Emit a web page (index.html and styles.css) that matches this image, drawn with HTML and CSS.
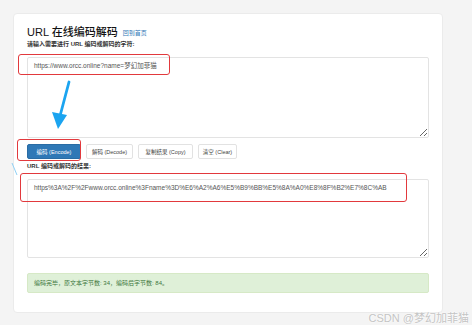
FILE: index.html
```html
<!DOCTYPE html>
<html lang="zh-CN">
<head>
  <meta charset="UTF-8" />
  <meta name="viewport" content="width=device-width, initial-scale=1.0"/>
  <title>URL 在线编码解码</title>
  <link rel="stylesheet" href="styles.css">
</head>
<body>

<div class="page">
  <div class="card">
    <h3 class="title">URL 在线编码解码 <a class="home-link" href="#">回到首页</a></h3>
    <p class="label">请输入需要进行 URL 编码或解码的字符:</p>
    <textarea class="box box-input">https://www.orcc.online?name=梦幻加菲猫</textarea>

    <div class="btn-row">
      <button class="btn btn-primary btn-encode">编码 (Encode)</button>
      <button class="btn btn-decode">解码 (Decode)</button>
      <button class="btn btn-copy">复制结果 (Copy)</button>
      <button class="btn btn-clear">清空 (Clear)</button>
    </div>

    <p class="label label-result">URL 编码或解码的结果:</p>
    <textarea class="box box-output">https%3A%2F%2Fwww.orcc.online%3Fname%3D%E6%A2%A6%E5%B9%BB%E5%8A%A0%E8%8F%B2%E7%8C%AB</textarea>

    <div class="alert-ok">编码完毕，原文本字节数: 34，编码后字节数: 84。</div>
  </div>

  <!-- marcações da captura -->
  <div class="mark mark-input"></div>
  <div class="mark mark-btn"></div>
  <div class="mark mark-output"></div>

  <svg class="arrow" width="474" height="327" viewBox="0 0 474 327">
    <line x1="69" y1="82" x2="60" y2="116" stroke="#1ba4f0" stroke-width="2.8" stroke-linecap="round"/>
    <polygon points="52,112 58,129 67,115" fill="#1ba4f0"/>
    <line x1="12" y1="163" x2="17" y2="175" stroke="#8fd0f5" stroke-width="1"/>
  </svg>

  <div class="watermark">CSDN @梦幻加菲猫</div>
</div>

</body>
</html>
```

FILE: styles.css
```css
body {
  margin: 0;
  background-color: #ffffff;
  font-family: "Liberation Sans", "Noto Sans CJK SC", sans-serif;
  color: #333;
}
.page {
  position: relative;
  width: 472px;
  height: 325px;
  background-color: #f4f4f4;
  padding: 13px 0 0 13px;
  box-sizing: border-box;
}
.card {
  width: 430px;
  box-sizing: border-box;
  background-color: #fff;
  border: 1px solid #ebebeb;
  border-radius: 4px;
  padding: 11px 13px 19px 13px;
}
.title {
  margin: 0;
  font-size: 11px;
  line-height: 14px;
  font-weight: 500;
  color: #111;
}
.home-link {
  font-size: 6px;
  font-weight: normal;
  color: #337ab7;
  text-decoration: none;
  margin-left: 2px;
  vertical-align: 1px;
}
.label {
  margin: 0 0 9px 0;
  font-size: 6px;
  line-height: 8px;
  font-weight: bold;
  color: #333;
}
.label-result { margin-top: 3px; }
.box {
  display: block;
  width: 402px;
  box-sizing: border-box;
  margin: 0;
  border: 1px solid #e3e3e3;
  border-radius: 2px;
  padding: 3px 6px;
  font-family: "Liberation Sans", "Noto Sans CJK SC", sans-serif;
  font-size: 6.5px;
  line-height: 9px;
  color: #555;
  background: #fff;
  outline: none;
}
.box-input { height: 81px; }
.box-output { height: 79px; }
.btn-row {
  display: flex;
  gap: 5px;
  margin-top: 6px;
}
.btn {
  height: 15px;
  padding: 0;
  border: 1px solid #e2e2e2;
  border-radius: 2px;
  background: #fff;
  color: #444;
  font-family: "Liberation Sans", "Noto Sans CJK SC", sans-serif;
  font-size: 5.5px;
  cursor: pointer;
}
.btn-primary {
  background-color: #2f78b6;
  border-color: #2a6ca4;
  color: #fff;
}
.btn-encode { width: 54px; }
.btn-decode { width: 47px; }
.btn-copy { width: 55px; }
.btn-clear { width: 39px; }
.alert-ok {
  margin-top: 15px;
  height: 20px;
  box-sizing: border-box;
  background-color: #dff0d8;
  border: 1px solid #d6e9c6;
  border-radius: 2px;
  color: #3c763d;
  font-size: 6px;
  line-height: 18px;
  padding: 0 6px;
}
.mark {
  position: absolute;
  border: 1.5px solid #e2393d;
  border-radius: 3px;
  box-sizing: border-box;
}
.mark-input { left: 18px; top: 54px; width: 152px; height: 21px; }
.mark-btn { left: 17px; top: 139px; width: 64px; height: 22px; }
.mark-output { left: 20px; top: 173px; width: 387px; height: 29px; }
.arrow {
  position: absolute;
  left: 0;
  top: 0;
}
.watermark {
  position: absolute;
  right: 3px;
  top: 311px;
  font-size: 11px;
  line-height: 14px;
  color: #c4c4c4;
  text-shadow: 0 0 2px #fff, 0 0 2px #fff;
}
```
